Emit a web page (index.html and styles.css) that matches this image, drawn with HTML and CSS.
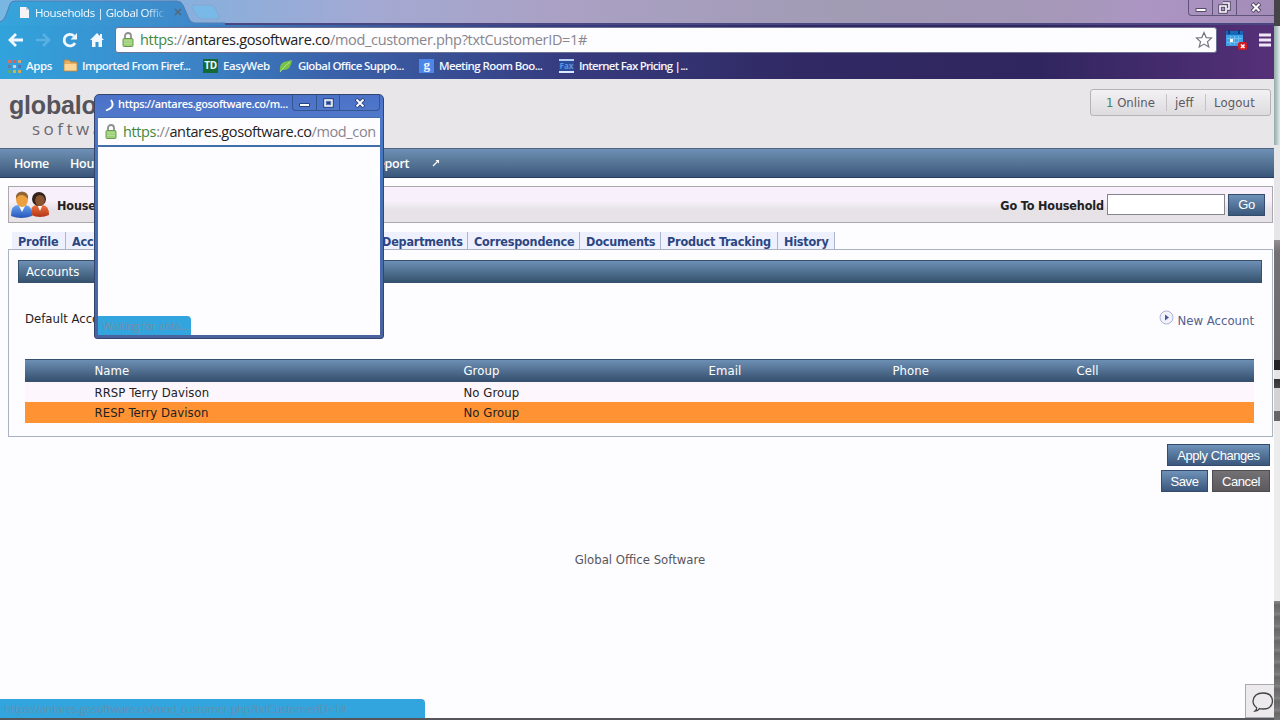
FILE: index.html
```html
<!DOCTYPE html>
<html lang="en">
<head>
  <meta charset="UTF-8">
  <title>Households | Global Office Software</title>
  <link rel="stylesheet" href="styles.css">
</head>
<body>
  <div class="desktop">
    <div class="browser">
      <div class="tabstrip">
        <svg class="tab-shape" width="225" height="25" viewBox="0 0 225 25">
          <defs>
            <linearGradient id="tabfill" x1="0" x2="1" y1="0" y2="0">
              <stop offset="0" stop-color="#35a5dc"/>
              <stop offset="1" stop-color="#4083c6"/>
            </linearGradient>
          </defs>
          <path d="M0 25V22Q4 21 6 15L10 4Q11 1 15 1H177Q181 1 183 5L189 19Q191 23 195 23H225V25Z" fill="url(#tabfill)"/>
          <path d="M0 22Q4 21 6 15L10 4Q11 1 15 1H177Q181 1 183 5L189 19Q191 23 195 23H225" fill="none" stroke="#527cb4"/>
          <path d="M195 5H211Q214 5 215 8L219 16Q220 19 216 19H202Q199 19 197 16L192 8Q191 5 195 5Z" fill="#78b9e8" stroke="#87a5cf"/>
        </svg>
        <div class="tab">
          <svg width="11" height="13" viewBox="0 0 11 13"><path d="M1 1H7L10 4V12H1Z" fill="#f5f3f5"/><path d="M7 1V4H10" fill="#c8ccd6"/></svg>
          <span class="tab-title">Households | Global Offic</span>
          <svg width="8" height="8" viewBox="0 0 8 8"><path d="M1 1L7 7M7 1L1 7" stroke="#53687c" stroke-width="1.500"/></svg>
        </div>
        <div class="window-buttons">
          <span><svg width="12" height="12" viewBox="0 0 12 12"><path d="M1 6.500H11V9.500H1Z" fill="#fff" stroke="#56496b"/></svg></span>
          <span><svg width="13" height="13" viewBox="0 0 13 13"><path d="M5 2H11V8H9M2 5H8V11H2Z" fill="none" stroke="#56496b" stroke-width="3.500"/><path d="M5 2H11V8H9M2 5H8V11H2Z" fill="none" stroke="#fff" stroke-width="1.600"/></svg></span>
          <span class="wide"><svg width="12" height="11" viewBox="0 0 12 11"><path d="M2 1.500L10 9.500M10 1.500L2 9.500" stroke="#56496b" stroke-width="4"/><path d="M2.500 2L9.500 9M9.500 2L2.500 9" stroke="#fff" stroke-width="2"/></svg></span>
        </div>
      </div>

      <div class="toolbar">
        <div class="nav-icons">
          <svg width="16" height="16" viewBox="0 0 16 16"><path d="M8 2L2 8L8 14M2 8H15" fill="none" stroke="#f2f8ff" stroke-width="2.800"/></svg>
          <svg width="16" height="16" viewBox="0 0 16 16"><path d="M8 2L14 8L8 14M14 8H1" fill="none" stroke="#5ab0e3" stroke-width="2.500"/></svg>
          <svg width="16" height="16" viewBox="0 0 16 16"><path d="M13 11A5.800 5.800 0 1 1 12 4" fill="none" stroke="#f2f8ff" stroke-width="2.800"/><path d="M15 1V7.500H8.500Z" fill="#f2f8ff"/></svg>
          <svg width="16" height="16" viewBox="0 0 16 16"><path d="M8 1L15 8H13V15H9.500V10H6.500V15H3V8H1Z" fill="#f2f8ff"/><path d="M11 2H13V6H11Z" fill="#f2f8ff"/></svg>
        </div>
        <div class="omnibox">
          <svg width="12" height="15" viewBox="0 0 12 15"><path d="M3 7V4A3 3 0 0 1 9 4V7" fill="none" stroke="#8c8f8c" stroke-width="1.800"/><rect x="1" y="6.500" width="10" height="8" rx="1" fill="#9bd076" stroke="#6c9a55"/><path d="M2 9H10M2 11.500H10" stroke="#b4de98"/></svg>
          <span class="url"><span class="secure">https</span>://<b>antares.gosoftware.co</b>/mod_customer.php?txtCustomerID=1#</span>
          <svg class="star" width="18" height="18" viewBox="0 0 18 18"><path d="M9 1.500L11.200 6.600L16.600 7L12.500 10.600L13.800 16L9 13.100L4.200 16L5.500 10.600L1.400 7L6.800 6.600Z" fill="#fff" stroke="#777480" stroke-width="1.200"/></svg>
        </div>
        <svg class="extension" width="24" height="22" viewBox="0 0 24 22"><rect x="1" y="2" width="17" height="15" fill="#3fa2e8"/><rect x="1" y="2" width="17" height="4" fill="#1768ba"/><path d="M4 1V5M14 1V5" stroke="#123a79" stroke-width="2"/><path d="M2 9.500H17M2 13.500H17M5.500 7V16M9.500 7V16M13.500 7V16" stroke="#70bdf0"/><rect x="5" y="10" width="3" height="3" fill="#fff"/><rect x="13" y="13" width="9" height="8" rx="2" fill="#cf1d24"/><path d="M16 15.500L19.500 19M19.500 15.500L16 19" stroke="#fff" stroke-width="1.600"/></svg>
        <svg class="menu" width="12" height="14" viewBox="0 0 12 14"><path d="M0 2H12M0 7H12M0 12H12" stroke="#efe6f6" stroke-width="3"/></svg>
      </div>

      <div class="bookmarks">
        <a class="bm-apps"><svg width="14" height="14" viewBox="0 0 14 14"><path d="M1 1h3v3H1z" fill="#dc7163"/><path d="M6 1h3v3H6z" fill="#d85f68"/><path d="M11 1h3v3h-3z" fill="#d8a56e"/><path d="M1 6h3v3H1z" fill="#5c7cae"/><path d="M6 6h3v3H6z" fill="#c9d1dd"/><path d="M11 6h3v3h-3z" fill="#5473b4"/><path d="M1 11h3v3H1z" fill="#62a873"/><path d="M6 11h3v3H6z" fill="#c8b45e"/><path d="M11 11h3v3h-3z" fill="#cfac57"/></svg><span>Apps</span></a>
        <a class="bm-folder"><svg width="15" height="13" viewBox="0 0 15 13"><path d="M1 12V2Q1 1 2 1H6L8 3H13Q14 3 14 4V12Z" fill="#e5b064" stroke="#b68545"/><path d="M1.500 5H13.500V11.500H1.500Z" fill="#fbd798"/></svg><span>Imported From Firef...</span></a>
        <a class="bm-td"><i class="icon-td">TD</i><span>EasyWeb</span></a>
        <a class="bm-leaf"><svg width="14" height="14" viewBox="0 0 14 14"><path d="M1 12Q0 5 5 3Q9 2 13 1Q12 12 3 11Z" fill="#77c246"/><path d="M1 13Q5 7 11 3" fill="none" stroke="#b9e28c"/></svg><span>Global Office Suppo...</span></a>
        <a class="bm-google"><i class="icon-g">g</i><span>Meeting Room Boo...</span></a>
        <a class="bm-fax"><i class="icon-fax">Fax</i><span>Internet Fax Pricing |...</span></a>
      </div>

      <div class="page">
        <div class="header">
          <div class="logo">
            <div class="logo-name">globaloffice</div>
            <div class="logo-sub">software</div>
          </div>
          <div class="user-box">
            <span class="online"><em>1</em> Online</span>
            <span class="user">jeff</span>
            <span class="logout">Logout</span>
          </div>
        </div>

        <div class="main-nav">
          <a class="home">Home</a>
          <a class="households">Households</a>
          <a class="report">Report</a>
          <svg width="8" height="8" viewBox="0 0 8 8"><path d="M1 7L6 2" stroke="#fff" stroke-width="1.300"/><path d="M3.500 1H7V4.500Z" fill="#fff"/></svg>
        </div>

        <div class="title-bar">
          <svg width="38" height="27" viewBox="0 0 38 27">
            <defs>
              <linearGradient id="blue" x1="0" x2="0" y1="0" y2="1"><stop offset="0" stop-color="#6aa2f0"/><stop offset="1" stop-color="#2455b8"/></linearGradient>
              <linearGradient id="red" x1="0" x2="0" y1="0" y2="1"><stop offset="0" stop-color="#ef7440"/><stop offset="1" stop-color="#b33417"/></linearGradient>
            </defs>
            <path d="M20 24Q19 14 26 14H31Q38 14 38 24Q29 28 20 24Z" fill="url(#red)"/>
            <path d="M26 13L29 20L32 13Z" fill="#fff"/>
            <circle cx="28" cy="8" r="7" fill="#31231c"/>
            <ellipse cx="29" cy="9.500" rx="4.800" ry="5.500" fill="#8b5430"/>
            <path d="M0 25Q0 14 7 14H14Q21 14 21 25Q10 29 0 25Z" fill="url(#blue)"/>
            <path d="M7 13L11 21L15 13Z" fill="#fff"/>
            <ellipse cx="11" cy="8.500" rx="6" ry="7.500" fill="#eda03e"/>
            <path d="M5 8Q4 1 11 .5Q18 1 17 8Q14 4 10 4Q7 4 5 8Z" fill="#906637"/>
          </svg>
          <b class="title">Households</b>
          <label class="goto" for="household">Go To Household</label>
          <input id="household" type="text">
          <button class="btn go">Go</button>
        </div>

        <div class="tabs">
          <a class="t-profile">Profile</a>
          <a class="t-accounts">Accounts</a>
          <a class="t-departments">Departments</a>
          <a class="t-corr">Correspondence</a>
          <a class="t-docs">Documents</a>
          <a class="t-track">Product Tracking</a>
          <a class="t-hist">History</a>
        </div>

        <div class="panel">
          <div class="section-bar">Accounts</div>
          <div class="account-line">
            <span class="default">Default Account</span>
            <a class="new-account">
              <svg width="15" height="15" viewBox="0 0 15 15"><circle cx="7.500" cy="7.500" r="6.500" fill="#f0f1fb" stroke="#adb2d8"/><path d="M6 4.500L10 7.500L6 10.500Z" fill="#4b5999"/></svg>
              <span>New Account</span>
            </a>
          </div>
          <div class="grid grid-head">
            <span></span><span>Name</span><span>Group</span><span>Email</span><span>Phone</span><span>Cell</span>
          </div>
          <div class="grid row">
            <span></span><span>RRSP Terry Davison</span><span>No Group</span><span></span><span></span><span></span>
          </div>
          <div class="grid row selected">
            <span></span><span>RESP Terry Davison</span><span>No Group</span><span></span><span></span><span></span>
          </div>
        </div>

        <div class="actions">
          <button class="btn apply">Apply Changes</button>
        </div>
        <div class="actions second">
          <button class="btn save">Save</button>
          <button class="btn cancel">Cancel</button>
        </div>
        <div class="footer">Global Office Software</div>
      </div>

      <div class="status"><span>https://antares.gosoftware.co/mod_customer.php?txtCustomerID=1#</span></div>
      <div class="chat"><svg width="22" height="22" viewBox="0 0 22 22"><path d="M4.500 16.500Q1 14 1 10Q2 2 11 2Q20 2 20.500 10Q20 18 11 18Q9 18 7.500 17.600Q6 20 3 20Q5 18.500 4.500 16.500Z" fill="none" stroke="#444" stroke-width="1.300"/></svg></div>

      <div class="popup">
        <div class="popup-bar">
          <svg width="10" height="14" viewBox="0 0 10 14"><path d="M6 2Q11 9 1 12.500" fill="none" stroke="#fff" stroke-width="1.800"/></svg>
          <span class="popup-title">https://antares.gosoftware.co/m...</span>
          <div class="popup-buttons">
            <span><svg width="11" height="10" viewBox="0 0 11 10"><path d="M.5 5.500H10.500V8.500H.5Z" fill="#fff" stroke="#29437e"/></svg></span>
            <span><svg width="11" height="10" viewBox="0 0 11 10"><path d="M2 2H9V8H2Z" fill="none" stroke="#29437e" stroke-width="3.600"/><path d="M2 2H9V8H2Z" fill="#5876b4" stroke="#fff" stroke-width="1.500"/><path d="M4 5H7" stroke="#29437e" stroke-width="2"/></svg></span>
            <span><svg width="12" height="10" viewBox="0 0 12 10"><path d="M2 1L10 9M10 1L2 9" stroke="#29437e" stroke-width="3.800"/><path d="M2.500 1.500L9.500 8.500M9.500 1.500L2.500 8.500" stroke="#fff" stroke-width="1.900"/></svg></span>
          </div>
        </div>
        <div class="popup-url">
          <svg width="12" height="15" viewBox="0 0 12 15"><path d="M3 7V4A3 3 0 0 1 9 4V7" fill="none" stroke="#8c8f8c" stroke-width="1.800"/><rect x="1" y="6.500" width="10" height="8" rx="1" fill="#9bd076" stroke="#6c9a55"/><path d="M2 9H10M2 11.500H10" stroke="#b4de98"/></svg>
          <span class="url"><span class="secure">https</span>://<b>antares.gosoftware.co</b>/mod_con</span>
        </div>
        <div class="popup-body"><span class="waiting">Waiting for anta...</span></div>
      </div>
    </div>
    <div class="behind">
      <i class="b-top"></i><i class="b-scroll"></i><i class="b-track"></i><i class="b-mid"></i><i class="b-stripes"></i><i class="b-light"></i><i class="b-low"></i>
    </div>
  </div>
</body>
</html>
```
FILE: styles.css
```css
body {
  margin: 0;
  font-family: "DejaVu Sans Condensed", "DejaVu Sans", Verdana, sans-serif;
  font-size: 13px;
  color: #222;
}

* {
  box-sizing: border-box;
}

svg {
  flex: none;
  display: block;
}

i, em {
  font-style: normal;
}

.desktop {
  display: flex;
  width: 1280px;
  height: 720px;
  overflow: hidden;
}

.browser {
  position: relative;
  display: flex;
  flex-direction: column;
  width: 1274px;
  height: 720px;
  border-bottom: 2px solid #55555c;
  background: linear-gradient(90deg, #31a3dc 0, #3c8bcc 160px, #3a62aa 330px, #373c80 560px, #302963 800px, #30265f 1040px, #553078 1274px) 0 0 / 100% 79px no-repeat;
}

/* browser chrome */
.tabstrip {
  position: relative;
  display: flex;
  justify-content: space-between;
  height: 25px;
  background: linear-gradient(90deg, #79b7e3 0, #8caedb 220px, #a3a9d3 370px, #aaa1c4 560px, #a19bb4 850px, #a598b8 1050px, #ac95c3 1150px, #a48cb8 1274px);
  border-bottom: 2px solid #494680;
}

.tab-shape {
  position: absolute;
  left: 0;
  top: 0;
}

.tab {
  position: relative;
  display: flex;
  align-items: center;
  height: 24px;
  padding-left: 19px;
  font: 500 11.500px "Open Sans", "Noto Sans", sans-serif;
  letter-spacing: -.4px;
  color: #f4faff;
}

.tab-title {
  width: 134px;
  margin: 0 5px 0 5px;
  white-space: nowrap;
  -webkit-mask-image: linear-gradient(90deg, #000 110px, transparent 134px);
}

.window-buttons {
  display: flex;
  height: 16px;
  border: 1px solid #61547a;
  border-top: 0;
  border-right: 0;
  border-radius: 0 0 0 4px;
}

.window-buttons span {
  display: flex;
  align-items: center;
  justify-content: center;
  width: 24px;
  border-right: 1px solid #61547a;
}

.window-buttons .wide {
  width: 37px;
  border-right: 0;
}

.toolbar {
  display: flex;
  align-items: center;
  height: 29px;
  padding-top: 1px;
}

.nav-icons {
  display: flex;
  gap: 11px;
  width: 115px;
  padding-left: 8px;
}

.omnibox {
  display: flex;
  align-items: center;
  width: 1102px;
  height: 26px;
  padding: 0 3px 1px 6px;
  background: #fdfdff;
  border: 1px solid #6d7192;
  border-radius: 3px;
}

.url {
  margin-left: 6px;
  font: 14.500px "Open Sans", "Noto Sans", sans-serif;
  letter-spacing: -.33px;
  color: #88858d;
  white-space: nowrap;
}

.url b {
  font-weight: normal;
  color: #222;
}

.url .secure {
  color: #43883d;
}

.star {
  margin-left: auto;
}

.extension {
  margin-left: 8px;
}

.menu {
  margin-left: 10px;
}

.bookmarks {
  display: flex;
  align-items: center;
  height: 25px;
  padding: 0 0 2px 7px;
  font: 600 11.500px "Open Sans", "Noto Sans", sans-serif;
  letter-spacing: -.6px;
  color: #f4f7ff;
}

.bookmarks a {
  display: flex;
  align-items: center;
  gap: 5px;
  white-space: nowrap;
}

.bm-apps { width: 56px; }
.bm-folder { width: 140px; }
.bm-td { width: 76px; }
.bm-leaf { width: 140px; }
.bm-google { width: 140px; }
.bm-fax { letter-spacing: -.75px; }

.bookmarks .bm-folder {
  gap: 4px;
}

.bm-apps,
.bm-td {
  letter-spacing: -.4px;
}

.icon-td,
.icon-g,
.icon-fax {
  width: 15px;
  height: 14px;
  line-height: 13px;
  text-align: center;
  font-weight: bold;
}

.icon-td {
  background: #136a35;
  font-size: 10px;
}

.icon-g {
  background: #4d86e8;
  font: bold 13px/12px "Liberation Serif", serif;
}

.icon-fax {
  border-top: 2px solid #b9cdf3;
  border-bottom: 2px solid #dce7ff;
  background: #274d9b;
  color: #5e93e4;
  font-size: 8px;
  line-height: 10px;
  letter-spacing: 0;
}

/* web page */
.page {
  flex: 1;
  background: #fdfcff;
}

.header {
  display: flex;
  justify-content: space-between;
  height: 69px;
  background: #e9e6ea;
}

.logo {
  padding: 12px 0 0 9px;
  color: #55545a;
}

.logo-name {
  font: bold 25px/28px "Liberation Sans", Arial, sans-serif;
  letter-spacing: -.2px;
}

.logo-sub {
  padding-left: 23px;
  font: 17px/20px "Open Sans", sans-serif;
  letter-spacing: 3.500px;
  color: #6a696f;
}

.user-box {
  display: flex;
  align-items: center;
  width: 181px;
  height: 27px;
  margin: 10px 3px 0 0;
  border: 1px solid #b5b3b6;
  border-radius: 3px;
  background: linear-gradient(#f3f1f3, #dddbdd);
  color: #5b595f;
}

.user-box span {
  height: 17px;
  line-height: 17px;
  padding-left: 8px;
  border-left: 1px solid #c5c3c6;
}

.user-box .online {
  width: 75px;
  padding-left: 15px;
  border: 0;
}

.user-box .user {
  width: 39px;
}

.user-box .logout {
  letter-spacing: .15px;
}

.user-box em {
  color: #47855c;
}

.main-nav {
  display: flex;
  align-items: center;
  height: 30px;
  padding-left: 14px;
  background: linear-gradient(#6e90b5, #567595 50%, #39557b);
  border-top: 1px solid #4c6684;
  border-bottom: 1px solid #243c60;
  font: 600 12.500px "Open Sans", "Noto Sans", sans-serif;
  letter-spacing: -.3px;
  color: #fff;
}

.main-nav .home {
  width: 56px;
}

.main-nav .households {
  width: 300px;
}

.main-nav .report {
  width: 62px;
}

.title-bar {
  display: flex;
  align-items: center;
  height: 37px;
  margin: 8px 1px 0 8px;
  padding: 0 7px 0 2px;
  border: 1px solid #aaa8ad;
  background: linear-gradient(#f8f0fa 40%, #e6e2e6 65%);
}

.title,
.goto {
  padding-top: 2px;
  font-weight: bold;
  font-size: 12.500px;
  letter-spacing: -.13px;
}

.title {
  margin-left: 8px;
}

.goto {
  margin-left: auto;
}

.title-bar input {
  width: 118px;
  height: 21px;
  margin: 0 3px;
  border: 1px solid #85838c;
  background: #fff;
}

.btn {
  height: 22px;
  padding: 0;
  border: 1px solid #344b6b;
  background: linear-gradient(#6f92b8, #3a577d);
  color: #fff;
  font: 13px "Liberation Sans", Arial, sans-serif;
  letter-spacing: -.45px;
}

.go { width: 37px; }
.apply { width: 103px; }
.save { width: 47px; }

.btn.cancel {
  width: 58px;
  border-color: #504d50;
  background: linear-gradient(#747174, #5c595c);
}

.tabs {
  display: flex;
  height: 17px;
  margin: 9px 0 0 12px;
  font-weight: bold;
  font-size: 12.500px;
  line-height: 19px;
  letter-spacing: -.2px;
  color: #2b4682;
}

.tabs a {
  padding-left: 6px;
  border-right: 1px solid #a8b6d4;
  background: #eef0fd;
  white-space: nowrap;
}

.t-profile { width: 54px; }
.t-accounts { width: 310px; }
.t-departments { width: 92px; }
.t-corr { width: 112px; }
.t-docs { width: 81px; }
.t-track { width: 117px; }
.t-hist { width: 57px; }

.panel {
  height: 188px;
  margin: 0 1px 0 8px;
  padding: 10px 9px 0;
  border: 1px solid #aab3c2;
}

.section-bar {
  height: 23px;
  margin-right: 1px;
  padding-left: 7px;
  background: linear-gradient(#6e90b5, #35536f);
  border: 1px solid #36516f;
  line-height: 21px;
  color: #fff;
}

.account-line {
  display: flex;
  justify-content: space-between;
  height: 76px;
  padding: 27px 9px 0 7px;
}

.default {
  line-height: 18px;
}

.new-account {
  display: flex;
  gap: 4px;
  color: #51608d;
}

.new-account span {
  line-height: 22px;
}

.grid {
  display: grid;
  grid-template-columns: 69.500px 369px 245px 184px 184px 1fr;
  margin: 0 9px 0 7px;
  letter-spacing: .06px;
}

.grid-head {
  height: 23px;
  background: linear-gradient(#6d8fb4, #36506f);
  border: solid #36516f;
  border-width: 1px 0;
  line-height: 21px;
  color: #fff;
}

.row {
  height: 20px;
  background: #fdf6fd;
  line-height: 21px;
}

.row.selected {
  height: 21px;
  background: #ff9233;
  line-height: 21px;
}

.actions {
  display: flex;
  justify-content: flex-end;
  gap: 4px;
  margin: 7px 4px 0 0;
}

.actions.second {
  margin-top: 4px;
}

.footer {
  margin-top: 60px;
  padding-left: 6px;
  text-align: center;
  line-height: 16px;
  color: #57555b;
}

.status {
  position: absolute;
  left: 0;
  bottom: 0;
  width: 425px;
  height: 19px;
  padding-left: 4px;
  border-radius: 0 4px 0 0;
  background: #32a5df;
  font: 11.500px/19px "Open Sans", sans-serif;
  letter-spacing: -.45px;
  color: #6290ae;
  white-space: nowrap;
}

.chat {
  position: absolute;
  right: 0;
  bottom: 0;
  width: 29px;
  height: 34px;
  padding: 6px 0 0 6px;
  overflow: hidden;
  border: 1px solid #aaa9ac;
  border-right: 0;
  background: #eceaed;
}

/* small window on top of the page */
.popup {
  position: absolute;
  left: 94px;
  top: 94px;
  display: flex;
  flex-direction: column;
  width: 290px;
  height: 245px;
  padding: 0 3px 3px;
  border: 1px solid #34456f;
  border-radius: 5px 5px 3px 3px;
  background: linear-gradient(#4b72c7, #5078ca 22px, #4576bd 60px, #4a639e);
}

.popup-bar {
  display: flex;
  height: 22px;
  padding-left: 7px;
}

.popup-bar > svg {
  margin-top: 3px;
}

.popup-title {
  width: 170px;
  margin: 0 4px 0 3px;
  font: 600 11px/17px "Open Sans", sans-serif;
  letter-spacing: -.35px;
  color: #fff;
  white-space: nowrap;
}

.popup-buttons {
  display: flex;
  width: 88px;
  height: 16px;
  border: 1px solid #35558f;
  border-top: 0;
  border-radius: 0 0 4px 4px;
}

.popup-buttons span {
  display: flex;
  flex: 1 0 23px;
  align-items: center;
  justify-content: center;
  border-right: 1px solid #35558f;
}

.popup-buttons span:last-child {
  flex-basis: 38px;
  border-right: 0;
}

.popup-url {
  display: flex;
  align-items: center;
  height: 30px;
  padding-left: 7px;
  overflow: hidden;
  border: solid #426fa9;
  border-width: 1px 0 2px;
  background: #fdfdff;
}

.popup-url .url {
  letter-spacing: -.38px;
}

.popup-body {
  display: flex;
  align-items: flex-end;
  flex: 1;
  background: #fdfcff;
}

.waiting {
  width: 93px;
  height: 19px;
  padding-left: 4px;
  border-radius: 0 4px 0 0;
  background: #32a5df;
  font: 11.500px/19px "Open Sans", sans-serif;
  letter-spacing: -.45px;
  color: #728fa5;
  white-space: nowrap;
}

/* window edge showing behind the browser */
.behind {
  display: flex;
  flex-direction: column;
  width: 6px;
  background: #777;
}

.b-top { height: 26px; background: #454449; }
.b-scroll { height: 119px; background: linear-gradient(90deg, #9aa, #abc3c4 40%, #e8e8e8); }
.b-track { height: 95px; background: #e6e5e7; }
.b-mid { height: 120px; background: linear-gradient(#929092, #737173 10%, #6c6a6c); }
.b-stripes { height: 61px; background: linear-gradient(#222 10px, #e5e5e5 10px, #e5e5e5 19px, #333 19px, #444 28px, #d4d3d4 28px, #d4d3d4 51px, #666 51px); }
.b-light { height: 180px; background: #ebebec; }
.b-low { flex: 1; background: repeating-linear-gradient(#858585 0, #747474 3px, #676767 4px, #777 12px); }
```
